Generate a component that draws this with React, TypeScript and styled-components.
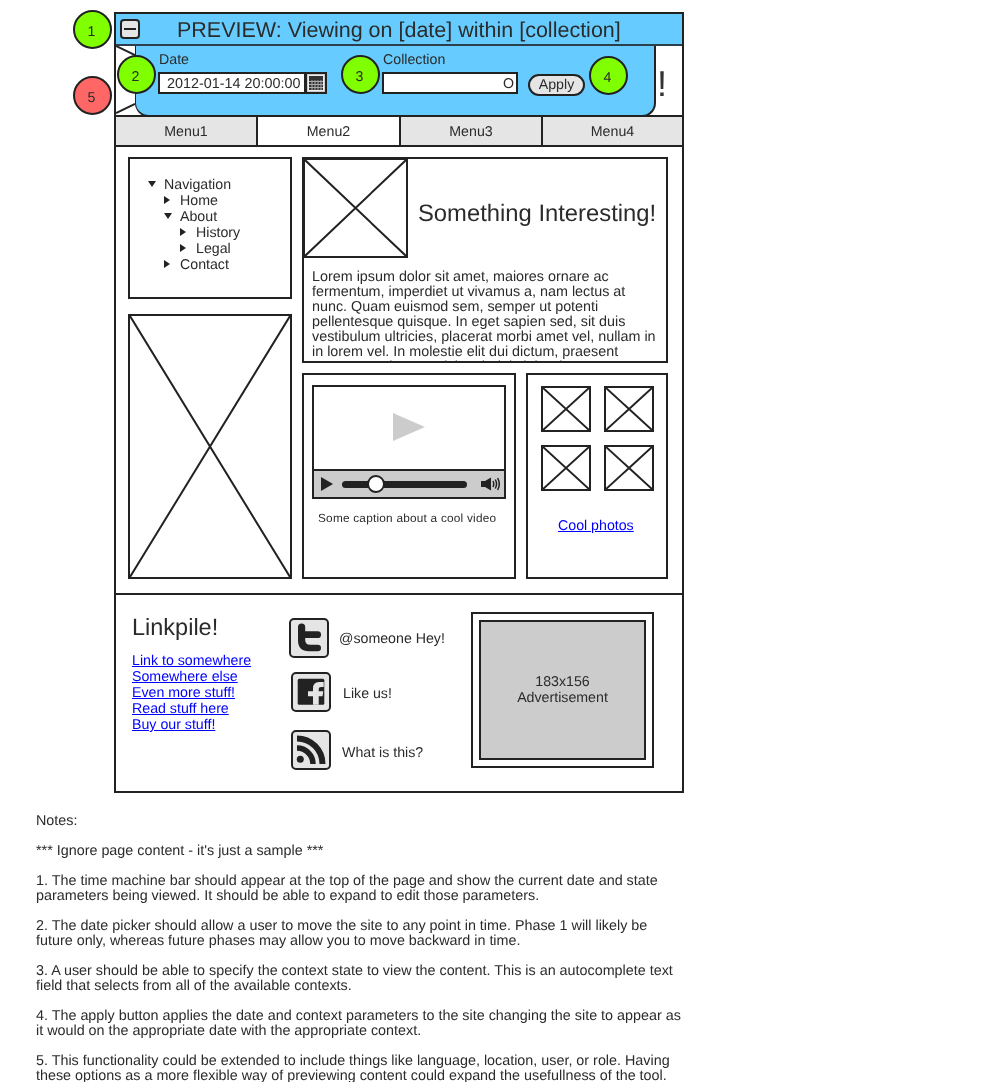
import styled, { createGlobalStyle } from "styled-components";

const ink = "#222";
const iconBg = "#e5e5e5";
const sans = `"Liberation Sans", Arial, sans-serif`;

const GlobalStyle = createGlobalStyle`
  html, body {
    margin: 0;
    height: 1082px;
    overflow: hidden;
    background: #fff;
    color: #2b2b2b;
    font-family: ${sans};
    font-size: 14.2px;
    text-rendering: geometricPrecision;
  }
  #root {
    will-change: transform; /* keeps text on grey antialiasing like the mock export */
  }
`;

const Frame = styled.div`
  position: relative;
  box-sizing: border-box;
  width: 570px;
  height: 781px;
  margin: 12px 0 0 114px;
  border: 2px solid ${ink};
  display: flex;
  flex-direction: column;
`;

const Badge = styled.div<{ $red?: boolean; $left: number; $top: number }>`
  position: absolute;
  left: ${(p) => p.$left}px;
  top: ${(p) => p.$top}px;
  box-sizing: border-box;
  width: 39px;
  height: 39px;
  padding: 4px 2px 0 0;
  border: 2px solid ${ink};
  border-radius: 50%;
  background: ${(p) => (p.$red ? "#ff6666" : "#80ff00")};
  display: flex;
  align-items: center;
  justify-content: center;
  z-index: 2;
`;

const TitleBar = styled.div`
  height: 30px;
  flex: none;
  background: #66ccff;
  border-bottom: 2px solid #2b3f4c;
  display: flex;
  align-items: center;
  padding-left: 4px;
`;

const Collapse = styled.div`
  box-sizing: border-box;
  width: 20px;
  height: 20px;
  border: 2px solid ${ink};
  border-radius: 4px;
  background: ${iconBg};
  display: flex;
  align-items: center;
  justify-content: center;
  &::after {
    content: "";
    width: 12px;
    height: 2px;
    background: ${ink};
  }
`;

const Title = styled.div`
  margin-left: 37px;
  padding-top: 2px;
  font-size: 21.5px;
  white-space: nowrap;
`;

const DrawerRow = styled.div`
  height: 69px;
  flex: none;
  display: flex;
`;

const DrawerEdge = styled.svg`
  width: 19px;
  height: 69px;
  flex: none;
`;

const Drawer = styled.div`
  box-sizing: border-box;
  width: 521px;
  height: 71px;
  flex: none;
  background: #66ccff;
  border: solid ${ink};
  border-width: 0 2px 2px 1px;
  border-radius: 0 0 14px 14px;
  display: flex;
  padding: 5px 0 0 22px;
`;

const Field = styled.div<{ $width: number }>`
  width: ${(p) => p.$width}px;
  flex: none;
`;

const FieldLabel = styled.div`
  height: 16px;
  line-height: 18px;
  margin-left: 1px;
`;

const InputRow = styled.div`
  display: flex;
  margin-top: 5px;
`;

const Input = styled.div<{ $width: number; $right?: boolean }>`
  box-sizing: border-box;
  width: ${(p) => p.$width}px;
  height: 22px;
  border: 2px solid ${ink};
  background: #fff;
  line-height: 21px;
  padding: 0 ${(p) => (p.$right ? 2 : 7)}px;
  text-align: ${(p) => (p.$right ? "right" : "left")};
  white-space: nowrap;
  font-size: ${(p) => (p.$right ? "14.2px" : "14.4px")};
`;

const CalendarButton = styled.div`
  box-sizing: border-box;
  width: 22px;
  height: 22px;
  margin-left: -1px;
  border: 2px solid ${ink};
  background: #ccc;
  display: flex;
  align-items: center;
  justify-content: center;
`;

const ApplyButton = styled.div`
  box-sizing: border-box;
  width: 57px;
  height: 22px;
  margin: 23px 0 0 10px;
  border: 2px solid ${ink};
  border-radius: 11px;
  background: ${iconBg};
  text-align: center;
  line-height: 19px;
`;

const Bang = styled.div`
  flex: 1;
  font-size: 36px;
  line-height: 76px;
  padding-left: 1px;
  color: #333;
`;

const Tabs = styled.div`
  height: 28px;
  flex: none;
  display: grid;
  grid-template-columns: 140px 143px 142px 1fr;
  grid-template-rows: 28px;
  border-top: 2px solid ${ink};
  border-bottom: 2px solid ${ink};
`;

const Tab = styled.div<{ $active?: boolean }>`
  overflow: hidden;
  background: ${(p) => (p.$active ? "#fff" : iconBg)};
  border-left: 2px solid ${ink};
  text-align: center;
  line-height: 31px;
  &:first-child {
    border-left: 0;
  }
`;

const Content = styled.div`
  box-sizing: border-box;
  height: 446px;
  flex: none;
  padding: 10px 14px 0 12px;
  display: grid;
  grid-template-columns: 164px 366px;
  column-gap: 10px;
`;

const LeftColumn = styled.div`
  display: flex;
  flex-direction: column;
  gap: 15px;
`;

const RightColumn = styled.div`
  display: flex;
  flex-direction: column;
  gap: 10px;
`;

const NavBox = styled.div`
  box-sizing: border-box;
  height: 142px;
  flex: none;
  border: 2px solid ${ink};
  padding: 17px 0 0 18px;
`;

const NavRow = styled.div<{ $depth: number }>`
  display: flex;
  align-items: center;
  height: 16px;
  padding-left: ${(p) => p.$depth * 16}px;
`;

const NavLabel = styled.span`
  padding-top: 2px;
`;

const NavArrow = styled.span<{ $open?: boolean }>`
  width: 16px;
  flex: none;
  &::before {
    content: "";
    display: block;
    width: 0;
    height: 0;
    border-style: solid;
    border-color: transparent;
    ${(p) =>
      p.$open
        ? `border-width: 6px 4.5px 0; border-top-color: ${ink};`
        : `border-width: 4.5px 0 4.5px 6px; border-left-color: ${ink};`}
  }
`;

const PlaceholderBox = styled.div<{ $width?: number; $height?: number }>`
  box-sizing: border-box;
  width: ${(p) => (p.$width ? `${p.$width}px` : "100%")};
  height: ${(p) => (p.$height ? `${p.$height}px` : "265px")};
  flex: none;
  border: 2px solid ${ink};
  background: #fff;
  svg {
    display: block;
    width: 100%;
    height: 100%;
  }
`;

const Article = styled.div`
  box-sizing: border-box;
  height: 206px;
  flex: none;
  border: 2px solid ${ink};
  overflow: hidden;
`;

const ArticleHead = styled.div`
  display: flex;
  align-items: center;
  margin: -1px 0 0 -1px;
`;

const ArticleTitle = styled.div`
  margin-left: 10px;
  padding-top: 12px;
  font-size: 23.8px;
  white-space: nowrap;
`;

const ArticleText = styled.p`
  margin: 12px 0 0 8px;
  white-space: nowrap;
  font-size: 14.35px;
  line-height: 15px;
`;

const MediaRow = styled.div`
  display: flex;
  gap: 10px;
`;

const MediaCard = styled.div<{ $width: number }>`
  box-sizing: border-box;
  width: ${(p) => p.$width}px;
  height: 206px;
  border: 2px solid ${ink};
`;

const Player = styled.div`
  box-sizing: border-box;
  width: 194px;
  height: 114px;
  margin: 10px 0 0 8px;
  border: 2px solid ${ink};
  display: flex;
  flex-direction: column;
`;

const Screen = styled.div`
  flex: 1;
  display: flex;
  align-items: center;
  justify-content: center;
  border-bottom: 2px solid ${ink};
  padding-bottom: 2px;
`;

const Controls = styled.div`
  height: 26px;
  flex: none;
  background: #ccc;
  display: flex;
  align-items: center;
  padding: 0 1px 0 7px;
`;

const Track = styled.div`
  position: relative;
  width: 125px;
  height: 7px;
  margin: 0 14px 0 9px;
  border-radius: 4px;
  background: ${ink};
`;

const Knob = styled.div`
  position: absolute;
  left: 25px;
  top: -6px;
  box-sizing: border-box;
  width: 18px;
  height: 18px;
  border: 2px solid ${ink};
  border-radius: 50%;
  background: #fff;
`;

const Caption = styled.div`
  margin: 12px 0 0 14px;
  font-size: 11.8px;
  letter-spacing: 0.23px;
  line-height: 14px;
  white-space: nowrap;
`;

const ThumbGrid = styled.div`
  display: grid;
  grid-template-columns: 50px 50px;
  gap: 13px;
  margin: 11px 0 0 13px;
`;

const Link = styled.a`
  color: #00f;
  text-decoration: underline;
  display: block;
  line-height: 16px;
`;

const PhotoLink = styled(Link)`
  margin: 27px 0 0 30px;
`;

const Footer = styled.div`
  flex: 1;
  border-top: 2px solid ${ink};
  display: flex;
`;

const LinkColumn = styled.div`
  width: 157px;
  flex: none;
  padding: 18px 0 0 16px;
  box-sizing: border-box;
`;

const LinkHeading = styled.div`
  font-size: 23.5px;
  line-height: 28px;
  margin-bottom: 12px;
`;

const SocialColumn = styled.div`
  width: 198px;
  flex: none;
`;

const SocialRow = styled.div<{ $indent: number; $top: number; $gap: number }>`
  display: flex;
  align-items: center;
  gap: ${(p) => p.$gap}px;
  margin: ${(p) => p.$top}px 0 0 ${(p) => p.$indent}px;
`;

const SocialLabel = styled.span<{ $drop: number }>`
  padding-top: ${(p) => p.$drop}px;
`;

const SocialIcon = styled.div`
  box-sizing: border-box;
  width: 40px;
  height: 40px;
  flex: none;
  border: 2px solid ${ink};
  border-radius: 5px;
  background: ${iconBg};
  svg {
    display: block;
    width: 36px;
    height: 36px;
  }
`;

const AdOuter = styled.div`
  box-sizing: border-box;
  width: 183px;
  height: 156px;
  margin-top: 17px;
  border: 2px solid ${ink};
  padding: 6px;
`;

const AdInner = styled.div`
  box-sizing: border-box;
  height: 100%;
  border: 2px solid ${ink};
  background: #ccc;
  display: flex;
  align-items: center;
  justify-content: center;
  text-align: center;
  line-height: 16px;
`;

const Notes = styled.div`
  margin: 21px 0 0 36px;
  width: 650px;
  font-size: 14.35px;
  line-height: 15px;
`;

const Note = styled.p`
  margin: 0 0 15px;
`;

const Cross = () => (
  <svg viewBox="0 0 100 100" preserveAspectRatio="none">
    <path d="M0 0L100 100M100 0L0 100" stroke={ink} strokeWidth={2} vectorEffect="non-scaling-stroke" fill="none" />
  </svg>
);

const navItems = [
  { label: "Navigation", depth: 0, open: true },
  { label: "Home", depth: 1 },
  { label: "About", depth: 1, open: true },
  { label: "History", depth: 2 },
  { label: "Legal", depth: 2 },
  { label: "Contact", depth: 1 },
];

const links = ["Link to somewhere", "Somewhere else", "Even more stuff!", "Read stuff here", "Buy our stuff!"];

const App = () => {
  return (
    <>
      <GlobalStyle />
      <Frame>
        <Badge $left={-43} $top={-4}>1</Badge>
        <Badge $left={1} $top={41}>2</Badge>
        <Badge $left={225} $top={41}>3</Badge>
        <Badge $left={473} $top={42}>4</Badge>
        <Badge $red $left={-43} $top={62}>5</Badge>

        <TitleBar>
          <Collapse />
          <Title>PREVIEW: Viewing on [date] within [collection]</Title>
        </TitleBar>

        <DrawerRow>
          <DrawerEdge viewBox="0 0 19 69">
            <path d="M0 0L19 9M0 67L19 58" stroke={ink} strokeWidth={2} fill="none" />
          </DrawerEdge>
          <Drawer>
            <Field $width={224}>
              <FieldLabel>Date</FieldLabel>
              <InputRow>
                <Input $width={148}>2012-01-14 20:00:00</Input>
                <CalendarButton>
                  <svg width="16" height="16" viewBox="0 0 16 16">
                    <rect width="16" height="16" fill="#eee" />
                    <rect x="1" y="1" width="14" height="14" fill="#333" />
                    <path d="M1 6.5H15M1 9.5H15M1 12.5H15M4 5V15M7 5V15M10 5V15M13 5V15" stroke="#aaa" strokeWidth={1} />
                  </svg>
                </CalendarButton>
              </InputRow>
            </Field>
            <Field $width={136}>
              <FieldLabel>Collection</FieldLabel>
              <InputRow>
                <Input $width={136} $right>O</Input>
              </InputRow>
            </Field>
            <ApplyButton>Apply</ApplyButton>
          </Drawer>
          <Bang>!</Bang>
        </DrawerRow>

        <Tabs>
          <Tab>Menu1</Tab>
          <Tab $active>Menu2</Tab>
          <Tab>Menu3</Tab>
          <Tab>Menu4</Tab>
        </Tabs>

        <Content>
          <LeftColumn>
            <NavBox>
              {navItems.map((item) => (
                <NavRow key={item.label} $depth={item.depth}>
                  <NavArrow $open={item.open} />
                  <NavLabel>{item.label}</NavLabel>
                </NavRow>
              ))}
            </NavBox>
            <PlaceholderBox>
              <Cross />
            </PlaceholderBox>
          </LeftColumn>

          <RightColumn>
            <Article>
              <ArticleHead>
                <PlaceholderBox $width={105} $height={100}>
                  <Cross />
                </PlaceholderBox>
                <ArticleTitle>Something Interesting!</ArticleTitle>
              </ArticleHead>
              <ArticleText>
                Lorem ipsum dolor sit amet, maiores ornare ac
                <br />
                fermentum, imperdiet ut vivamus a, nam lectus at
                <br />
                nunc. Quam euismod sem, semper ut potenti
                <br />
                pellentesque quisque. In eget sapien sed, sit duis
                <br />
                vestibulum ultricies, placerat morbi amet vel, nullam in
                <br />
                in lorem vel. In molestie elit dui dictum, praesent
                <br />
                nascetur, vulputate nisl sed, duis lobortis amet.
              </ArticleText>
            </Article>

            <MediaRow>
              <MediaCard $width={214}>
                <Player>
                  <Screen>
                    <svg width="32" height="28" viewBox="0 0 32 28">
                      <path d="M0 0L32 14L0 28Z" fill="#ccc" />
                    </svg>
                  </Screen>
                  <Controls>
                    <svg width="12" height="14" viewBox="0 0 12 14" style={{ flex: "none" }}>
                      <path d="M0 0L12 7L0 14Z" fill={ink} />
                    </svg>
                    <Track>
                      <Knob />
                    </Track>
                    <svg width="20" height="16" viewBox="0 0 20 16" style={{ flex: "none" }}>
                      <path d="M0 5H4L10 1.5V14.5L4 11H0Z" fill={ink} />
                      <path d="M12 5Q13.5 8 12 11M14.3 3.5Q16.8 8 14.3 12.5M16.6 2Q20 8 16.6 14" stroke={ink} strokeWidth={1.5} fill="none" />
                    </svg>
                  </Controls>
                </Player>
                <Caption>Some caption about a cool video</Caption>
              </MediaCard>
              <MediaCard $width={142}>
                <ThumbGrid>
                  {[0, 1, 2, 3].map((i) => (
                    <PlaceholderBox key={i} $width={50} $height={46}>
                      <Cross />
                    </PlaceholderBox>
                  ))}
                </ThumbGrid>
                <PhotoLink href="#">Cool photos</PhotoLink>
              </MediaCard>
            </MediaRow>
          </RightColumn>
        </Content>

        <Footer>
          <LinkColumn>
            <LinkHeading>Linkpile!</LinkHeading>
            {links.map((label) => (
              <Link key={label} href="#">{label}</Link>
            ))}
          </LinkColumn>
          <SocialColumn>
            <SocialRow $indent={16} $top={23} $gap={10}>
              <SocialIcon>
                <svg viewBox="0 0 36 36">
                  <path d="M7 7A3.6 3.6 0 0 1 14.2 7V11.3H26.7A3.3 3.3 0 0 1 26.7 18H14.2V20Q14.2 24.7 19 24.7H26.7A3.3 3.3 0 0 1 26.7 31.3H18Q7 31.3 7 20Z" fill={ink} />
                </svg>
              </SocialIcon>
              <SocialLabel $drop={2}>@someone Hey!</SocialLabel>
            </SocialRow>
            <SocialRow $indent={18} $top={14} $gap={12}>
              <SocialIcon>
                <svg viewBox="0 0 36 36">
                  <rect x="4.7" y="4.7" width="26.6" height="26" rx="1.5" fill={ink} />
                  <path d="M20 30.7V22.3H15V17.3H20V14.5Q20 8 26 8H30.7V13H28Q25.7 13 25.7 15V17.3H30.3L29.5 22.3H25.7V30.7Z" fill={iconBg} />
                </svg>
              </SocialIcon>
              <SocialLabel $drop={4}>Like us!</SocialLabel>
            </SocialRow>
            <SocialRow $indent={18} $top={18} $gap={11}>
              <SocialIcon>
                <svg viewBox="0 0 36 36">
                  <circle cx="7.3" cy="27.3" r="3.5" fill={ink} />
                  <path d="M4 16A16 16 0 0 1 20 32" stroke={ink} strokeWidth={5.5} fill="none" />
                  <path d="M4 6.5A25.5 25.5 0 0 1 29.5 32" stroke={ink} strokeWidth={6} fill="none" />
                </svg>
              </SocialIcon>
              <SocialLabel $drop={6}>What is this?</SocialLabel>
            </SocialRow>
          </SocialColumn>
          <AdOuter>
            <AdInner>
              183x156
              <br />
              Advertisement
            </AdInner>
          </AdOuter>
        </Footer>
      </Frame>

      <Notes>
        <Note>Notes:</Note>
        <Note>*** Ignore page content - it's just a sample ***</Note>
        <Note>
          1. The time machine bar should appear at the top of the page and show the current date and state parameters
          being viewed. It should be able to expand to edit those parameters.
        </Note>
        <Note>
          2. The date picker should allow a user to move the site to any point in time. Phase 1 will likely be future
          only, whereas future phases may allow you to move backward in time.
        </Note>
        <Note>
          3. A user should be able to specify the context state to view the content. This is an autocomplete text field
          that selects from all of the available contexts.
        </Note>
        <Note>
          4. The apply button applies the date and context parameters to the site changing the site to appear as it would
          on the appropriate date with the appropriate context.
        </Note>
        <Note>
          5. This functionality could be extended to include things like language, location, user, or role. Having these
          options as a more flexible way of previewing content could expand the usefullness of the tool.
        </Note>
      </Notes>
    </>
  );
};

export default App;
